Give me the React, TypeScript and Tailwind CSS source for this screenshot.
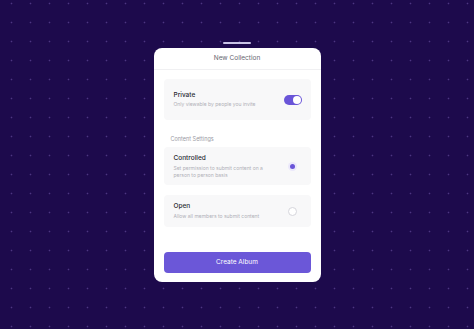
import React from 'react';

// ── Option row with a radio on the right ──────────────────────────────────

function OptionRow({ title, desc, checked, h }: { title: string; desc: React.ReactNode; checked: boolean; h: string }) {
  return (
    <div className={`flex items-center justify-between rounded-[4px] bg-[#f8f8f9] pl-[10px] pr-[14px] ${h}`}>
      <div className="flex flex-col">
        <span className="text-[6.5px] leading-[9px] font-medium text-[#2a2a33]">{title}</span>
        <span className="mt-[2px] text-[5px] leading-[7px] text-[#b0b0b8]">{desc}</span>
      </div>
      {checked ? (
        <span className="flex h-[9px] w-[9px] items-center justify-center rounded-full bg-[#ebe8fb]">
          <span className="h-[5px] w-[5px] rounded-full bg-[#6a55d8]" />
        </span>
      ) : (
        <span className="h-[9px] w-[9px] rounded-full border border-[#d6d6dc] bg-white" />
      )}
    </div>
  );
}

export default function App() {
  return (
    <div
      className="flex h-[329px] w-[474px] flex-col items-center bg-[#1d0a4c] bg-[radial-gradient(circle,rgba(150,120,210,0.4)_0.7px,transparent_1.1px)] bg-[length:19px_19px] bg-[position:2px_-6px] pt-[42px]"
      style={{ fontFamily: 'Inter, "Noto Sans", sans-serif' }}
    >
      {/* drag handle */}
      <div className="h-[2px] w-[28px] rounded-full bg-[#c9c3e6]" />

      <div className="mt-[4px] flex h-[234px] w-[167px] flex-col rounded-[8px] bg-white">
        {/* header */}
        <div className="flex h-[22px] items-center justify-center border-b border-[#f0f0f2]">
          <span className="text-[6.5px] text-[#66666f]">New Collection</span>
        </div>

        <div className="flex flex-col px-[10px]">
          {/* Private */}
          <div className="mt-[9px] flex h-[41px] items-center justify-between rounded-[4px] bg-[#f8f8f9] pl-[10px] pr-[9px]">
            <div className="flex flex-col">
              <span className="text-[6.5px] leading-[9px] font-medium text-[#2a2a33]">Private</span>
              <span className="mt-[1px] text-[5px] leading-[7px] text-[#b0b0b8]">Only viewable by people you invite</span>
            </div>
            <div className="flex h-[10px] w-[18px] items-center justify-end rounded-full bg-[#6a55d8] px-[1px]">
              <span className="h-[8px] w-[8px] rounded-full bg-white" />
            </div>
          </div>

          <span className="mt-[16px] pl-[7px] text-[5.5px] leading-[7px] text-[#9a9aa3]">Content Settings</span>

          <div className="mt-[4px]">
            <OptionRow
              h="h-[38px]"
              title="Controlled"
              checked
              desc={<>Set permission to submit content on a<br />person to person basis</>}
            />
          </div>
          <div className="mt-[10px]">
            <OptionRow h="h-[32px]" title="Open" checked={false} desc="Allow all members to submit content" />
          </div>

          <button className="mt-[25px] flex h-[21px] items-center justify-center rounded-[4px] bg-[#6b57d8] text-[6.5px] text-white">
            Create Album
          </button>
        </div>
      </div>
    </div>
  );
}
